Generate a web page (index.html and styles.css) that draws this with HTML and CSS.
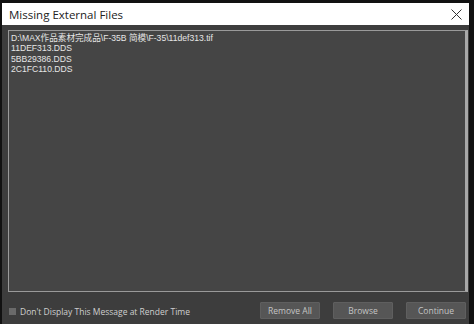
FILE: index.html
```html
<!DOCTYPE html>
<html lang="en">
<head>
    <meta charset="UTF-8">
    <title>Missing External Files</title>
    <link rel="stylesheet" href="styles.css">
</head>
<body>
    <div class="window">
        <div class="titlebar">
            <span class="title">Missing External Files</span>
            <svg class="close" width="11" height="11" viewBox="0 0 11 11">
                <path d="M0.5 0.5 L10.5 10.5 M10.5 0.5 L0.5 10.5" stroke="#333" stroke-width="1" fill="none"/>
            </svg>
        </div>

        <div class="content">
            <div class="file-list">
                <div class="file">D:\MAX作品素材完成品\F-35B 简模\F-35\11def313.tif</div>
                <div class="file">11DEF313.DDS</div>
                <div class="file">5BB29386.DDS</div>
                <div class="file">2C1FC110.DDS</div>
            </div>

            <div class="footer">
                <label class="option">
                    <span class="checkbox"></span>
                    Don't Display This Message at Render Time
                </label>
                <div class="buttons">
                    <button class="btn">Remove All</button>
                    <button class="btn">Browse</button>
                    <button class="btn">Continue</button>
                </div>
            </div>
        </div>
    </div>
</body>
</html>
```

FILE: styles.css
```css
body {
    margin: 0;
    background-color: #111;
    font-family: "Open Sans", "Noto Sans CJK SC", sans-serif;
}

.window {
    width: 467px;
    height: 321px;
    margin: 3px 5px 0 2px;
    display: flex;
    flex-direction: column;
    background-color: #3d3d3d;
}

.titlebar {
    height: 22px;
    background-color: #fff;
    display: flex;
    align-items: center;
    justify-content: space-between;
    padding: 0 7px 0 7px;
}

.title {
    font-size: 11.5px;
    color: #222;
}

.close {
    margin-top: 1px;
}

.content {
    flex: 1;
    display: flex;
    flex-direction: column;
    padding: 5px 0 0 6px;
}

.file-list {
    height: 256px;
    margin-right: 1px;
    border: 1px solid #9a9a9a;
    border-right: 3px solid #a8a8a8;
    background-color: #454545;
    padding: 2px 2px;
    font-family: "Liberation Sans", "Noto Sans CJK SC", sans-serif;
    font-size: 8.6px;
    line-height: 10.4px;
    color: #e6e6e6;
}

.footer {
    display: flex;
    align-items: center;
    justify-content: space-between;
    padding: 10px 3px 0 1px;
}

.option {
    display: flex;
    align-items: center;
    gap: 4px;
    font-size: 8.5px;
    color: #cfcfcf;
    margin-top: 2px;
}

.checkbox {
    width: 7px;
    height: 7px;
    background-color: #6a6a6a;
}

.buttons {
    display: flex;
    gap: 13px;
}

.btn {
    width: 60px;
    height: 17px;
    padding: 0;
    border: 1px solid #5f5f5f;
    border-radius: 1px;
    background-color: #565656;
    color: #c4c4c4;
    font-family: "Open Sans", sans-serif;
    font-size: 8.5px;
}
```
